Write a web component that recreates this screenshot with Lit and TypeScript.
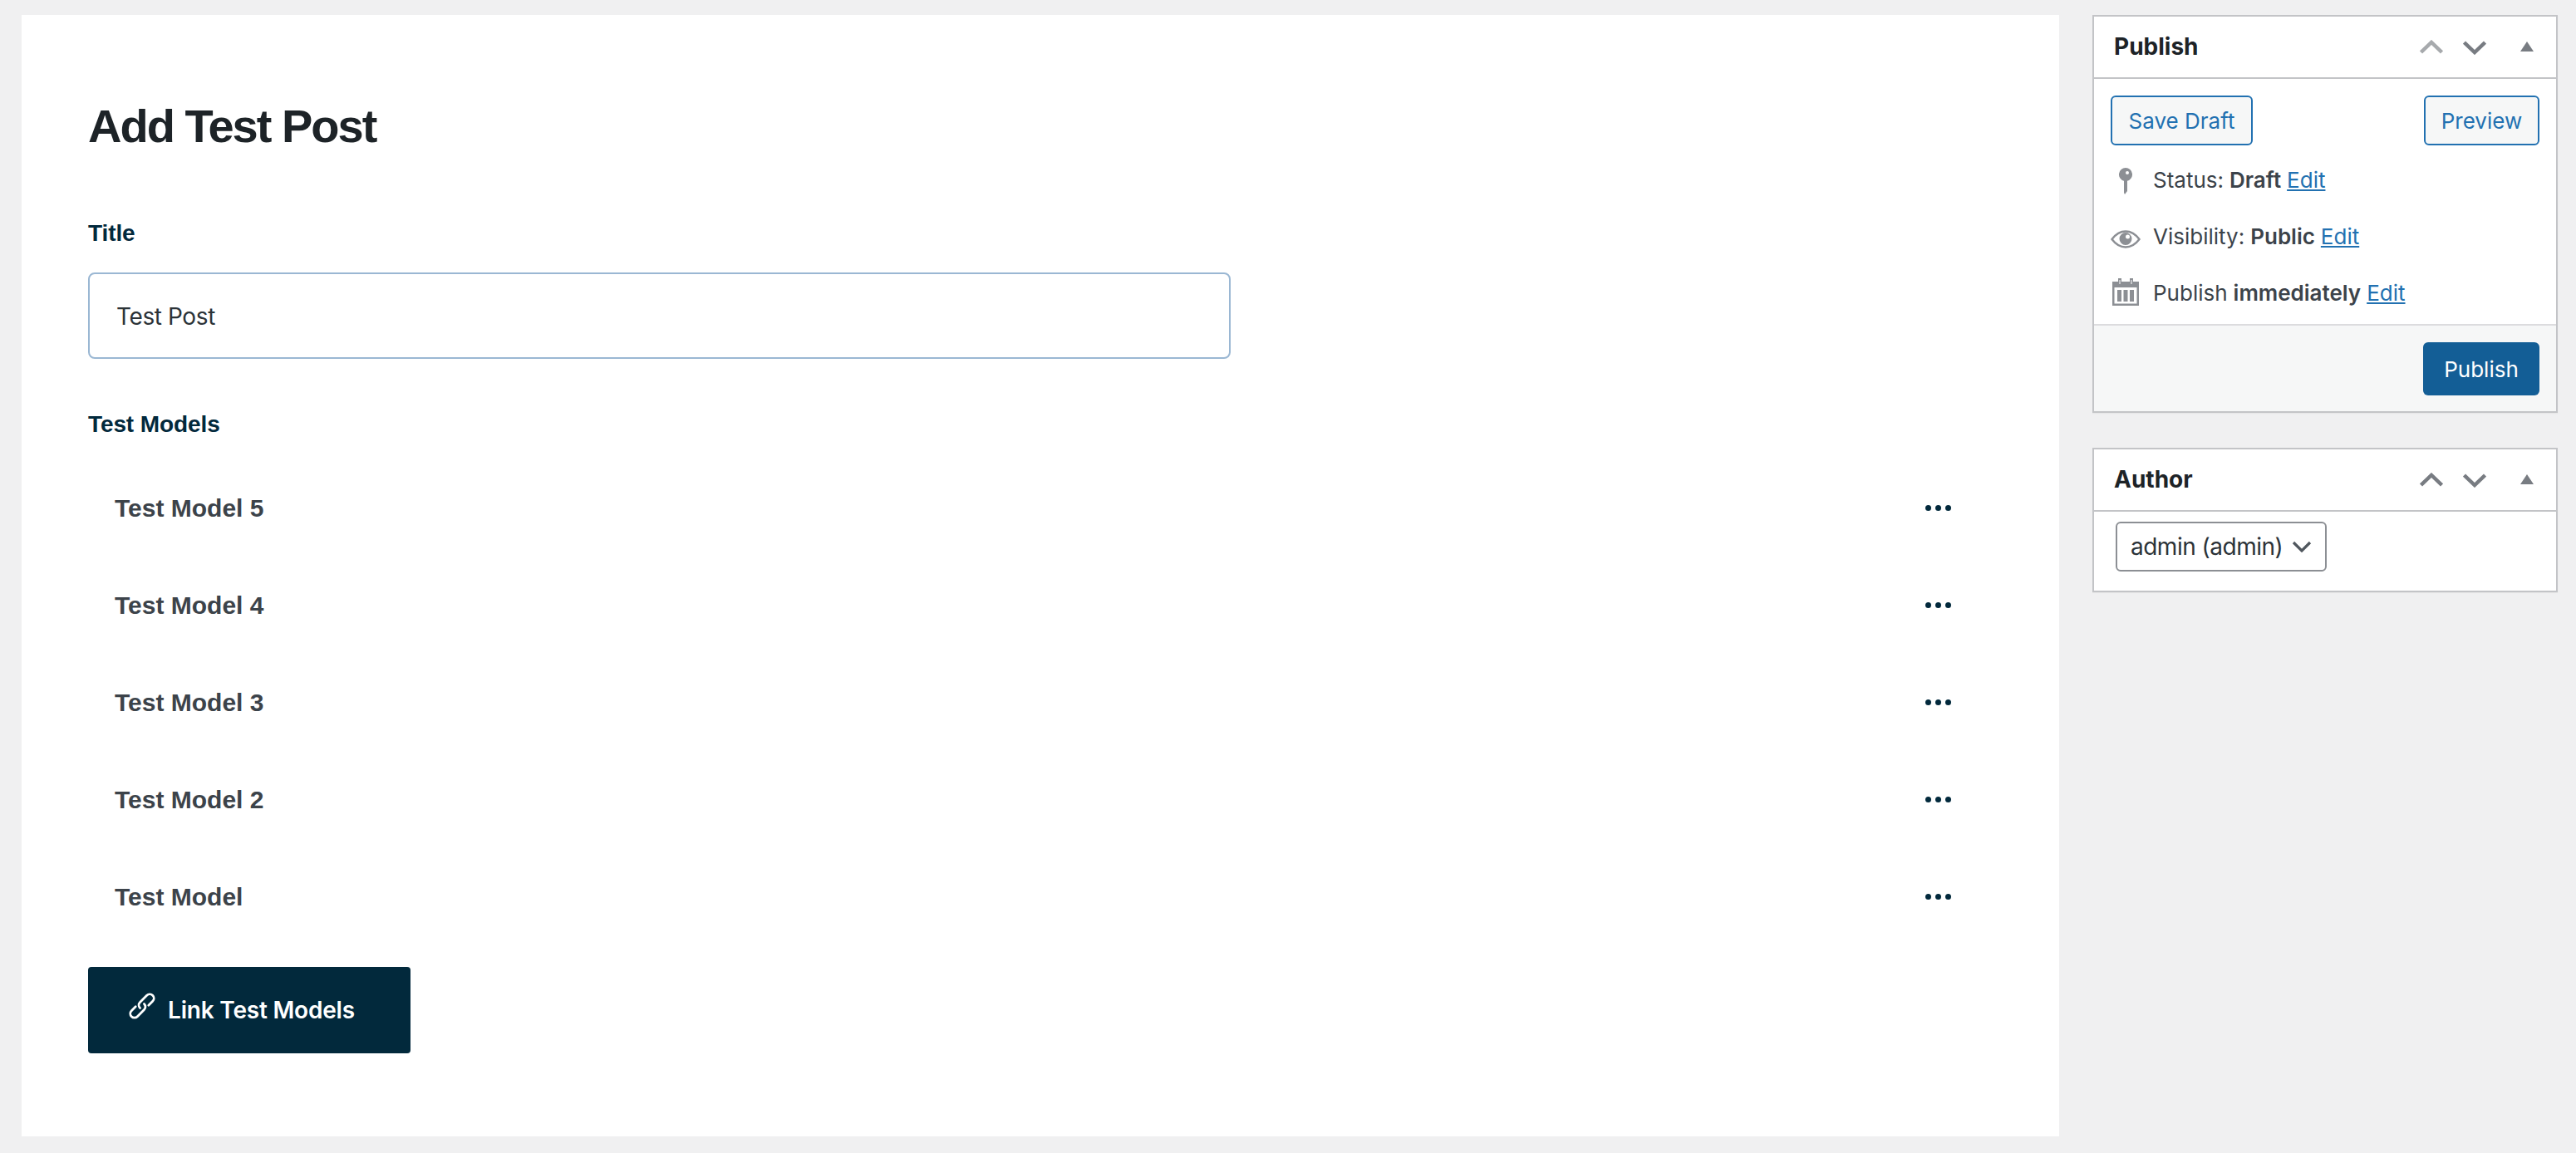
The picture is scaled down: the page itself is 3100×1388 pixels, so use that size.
import { LitElement, html, css } from "lit";
import { customElement } from "lit/decorators.js";

const chevron = (dir: "up" | "down", muted = false) => html`<svg class="ctl ${muted ? "muted" : ""}" width="28" height="18" viewBox="0 0 28 18">
  <path d=${dir === "up" ? "M1.500 15 14 3 26.500 15" : "M1.500 3 14 15 26.500 3"} fill="none" stroke="currentColor" stroke-width="4.500"/></svg>`;
const tri = html`<svg class="tri" width="16" height="12" viewBox="0 0 16 12"><path d="M8 0 16 12H0z" fill="currentColor"/></svg>`;

@customElement("app-root")
export class AppRoot extends LitElement {
  static styles = css`
    :host { display: block; width: 3100px; height: 1388px; background: #f0f0f1; font-family: Inter, "Liberation Sans", sans-serif; overflow: hidden; }
    .page { display: flex; gap: 40px; padding: 18px 22px 20px 26px; box-sizing: border-box; height: 1388px; align-items: flex-start; }
    main { width: 2452px; height: 1350px; background: #fff; box-sizing: border-box; padding: 98px 80px 0; flex: none; }
    h1 { margin: 0; font: 700 56px/72px "Liberation Sans", sans-serif; color: #1d2327; letter-spacing: -2px; }
    .label { font: 700 28px/32px "Liberation Sans", sans-serif; color: #02293c; letter-spacing: -0.1px; }
    .label.t { margin-top: 77px; }
    .label.m { margin-top: 63px; }
    .input { margin-top: 31px; width: 1375px; height: 104px; box-sizing: border-box; border: 2px solid #9ab7d3; border-radius: 8px; padding: 2px 32px 0; display: flex; align-items: center; font-size: 28px; color: #2c3338; letter-spacing: -0.4px; }
    .rows { margin-top: 26px; }
    .row { height: 117px; display: flex; align-items: center; justify-content: space-between; padding: 0 50px 0 32px; font: 700 30px "Liberation Sans", sans-serif; color: #3c434a; }
    .dots { display: flex; gap: 4.5px; }
    .dots i { width: 7.5px; height: 7.5px; border-radius: 50%; background: #02293c; }
    .btn { margin-top: 26px; width: 388px; height: 104px; background: #02293c; border-radius: 4px; color: #fff; display: flex; align-items: center; padding-left: 49px; box-sizing: border-box; font-size: 28px; font-weight: 600; letter-spacing: -0.2px; }
    .btn svg { margin-right: 15px; margin-top: -10px; }
    aside { width: 560px; flex: none; display: flex; flex-direction: column; gap: 42px; }
    .box { border: 2px solid #c3c4c7; background: #fff; box-sizing: border-box; box-shadow: 0 1px 1px rgba(0,0,0,.04); }
    .head { height: 73px; border-bottom: 2px solid #c3c4c7; display: flex; align-items: center; padding: 0 24px; font-size: 28px; font-weight: 700; color: #1d2327; }
    .head span { flex: 1; margin-top: -1px; }
    .ctl { color: #787c82; flex: none; }
    .ctl.muted { color: #a7aaad; }
    .ctl + .ctl { margin-left: 24px; }
    .tri { color: #787c82; margin-left: 41px; margin-right: 3px; margin-top: -2px; flex: none; }
    .actions { display: flex; justify-content: space-between; padding: 20px 20px 0; }
    .sec { height: 60px; box-sizing: border-box; border: 2px solid #2271b1; background: #f6f7f7; border-radius: 6px; color: #2271b1; font-size: 26px; display: flex; align-items: center; justify-content: center; }
    .sec.a { width: 171px; }
    .sec.b { width: 139px; }
    .misc { padding-top: 7px; height: 215px; box-sizing: border-box; }
    .mrow { height: 68px; display: flex; align-items: center; font-size: 26px; color: #3c434a; position: relative; padding-left: 71px; }
    .mrow b { font-weight: 600; margin: 0 7px; }
    .mrow a { color: #2271b1; text-decoration: underline; }
    .mrow svg { position: absolute; color: #8c8f94; }
    .pin { left: 30px; top: 20px; }
    .eye { left: 20px; top: 27px; }
    .cal { left: 22px; top: 17px; }
    .foot { border-top: 2px solid #dcdcde; background: #f6f7f7; height: 105px; box-sizing: border-box; display: flex; justify-content: flex-end; align-items: flex-start; padding: 20px 20px 0; }
    .pub { width: 140px; height: 64px; background: #135e96; color: #fff; border-radius: 6px; font-size: 26px; display: flex; align-items: center; justify-content: center; }
    .sel-wrap { padding: 12px 26px 23px; }
    .sel { width: 254px; height: 60px; box-sizing: border-box; border: 2px solid #8c8f94; border-radius: 6px; display: flex; align-items: center; padding-left: 16px; font-size: 28px; letter-spacing: -0.5px; color: #2c3338; background: #fff; gap: 11px; }
  `;

  render() {
    const names = ["Test Model 5", "Test Model 4", "Test Model 3", "Test Model 2", "Test Model"];
    return html`<div class="page">
      <main>
        <h1>Add Test Post</h1>
        <div class="label t">Title</div>
        <div class="input">Test Post</div>
        <div class="label m">Test Models</div>
        <div class="rows">
          ${names.map((n) => html`<div class="row"><span>${n}</span><span class="dots"><i></i><i></i><i></i></span></div>`)}
        </div>
        <div class="btn">
          <svg width="32" height="32" viewBox="0 0 32 32" fill="none" stroke="currentColor" stroke-width="2.800" stroke-linecap="round">
            <g transform="rotate(-45 16 16)">
              <path d="M12.500 16a5 5 0 0 1 5-5H29a5 5 0 0 1 0 10H22"/>
              <path d="M19.500 16a5 5 0 0 1-5 5H3a5 5 0 0 1 0-10H10"/>
            </g>
          </svg>
          Link Test Models
        </div>
      </main>
      <aside>
        <section class="box">
          <div class="head"><span>Publish</span>${chevron("up", true)}${chevron("down")}${tri}</div>
          <div class="actions"><div class="sec a">Save Draft</div><div class="sec b">Preview</div></div>
          <div class="misc">
            <div class="mrow">
              <svg class="pin" width="16" height="32" viewBox="0 0 16 32"><path fill="currentColor" fill-rule="evenodd" d="M8 0a8 8 0 0 1 2 15.750V28l-3 4-1-2V15.750A8 8 0 0 1 8 0Zm2 4a2 2 0 1 0 0 4 2 2 0 0 0 0-4Z"/></svg>
              Status:<b>Draft</b><a>Edit</a>
            </div>
            <div class="mrow">
              <svg class="eye" width="36" height="22" viewBox="0 0 36 22"><path fill="none" stroke="currentColor" stroke-width="2.400" d="M1.500 11C6 5 11.500 1.500 18 1.500S30 5 34.500 11C30 17 24.500 20.500 18 20.500S6 17 1.500 11Z"/><path fill="currentColor" fill-rule="evenodd" d="M18 3a7.500 7.500 0 1 1 0 15 7.500 7.500 0 0 1 0-15Zm2.500 2.500a2.500 2.500 0 1 0 0 5 2.500 2.500 0 0 0 0-5Z"/></svg>
              Visibility:<b>Public</b><a>Edit</a>
            </div>
            <div class="mrow">
              <svg class="cal" width="32" height="33" viewBox="0 0 32 33"><path fill="currentColor" fill-rule="evenodd" d="M0 4h7V0h4v4h10V0h4v4h7v29H0ZM2.500 11v19.500h27V11Z"/><path fill="#fff" d="M8.500 2h1v5h-1zM22.500 2h1v5h-1z"/><path fill="currentColor" d="M6 14h5v14H6zM13.500 14h5v14h-5zM21 14h5v14h-5z"/></svg>
              Publish<b>immediately</b><a>Edit</a>
            </div>
          </div>
          <div class="foot"><div class="pub">Publish</div></div>
        </section>
        <section class="box">
          <div class="head"><span>Author</span>${chevron("up")}${chevron("down")}${tri}</div>
          <div class="sel-wrap"><div class="sel">admin (admin)
            <svg width="24" height="14" viewBox="0 0 24 14"><path d="M2 2l10 10L22 2" fill="none" stroke="#50575e" stroke-width="3.200"/></svg>
          </div></div>
        </section>
      </aside>
    </div>`;
  }
}
